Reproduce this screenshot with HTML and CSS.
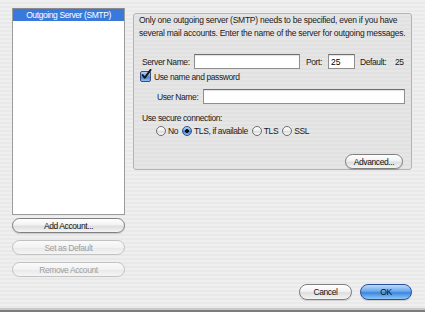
FILE: index.html
```html
<!DOCTYPE html>
<html lang="en">
<head>
    <meta charset="UTF-8">
    <title>Accounts - Outgoing Server</title>
    <link rel="stylesheet" href="styles.css">
</head>
<body>
    <div class="window">
        <div class="main">
            <!-- Account list on the left -->
            <div class="sidebar">
                <div class="account-list">
                    <div class="account-item selected">Outgoing Server (SMTP)</div>
                </div>
                <div class="side-buttons">
                    <button type="button" class="aqua-btn">Add Account...</button>
                    <button type="button" class="aqua-btn" disabled>Set as Default</button>
                    <button type="button" class="aqua-btn" disabled>Remove Account</button>
                </div>
            </div>

            <!-- SMTP settings group box -->
            <div class="group">
                <p class="intro">Only one outgoing server (SMTP) needs to be specified, even if you have<br>several mail accounts. Enter the name of the server for outgoing messages.</p>

                <div class="row server-row">
                    <label class="server-label">Server Name:</label>
                    <input type="text" class="field server-field">
                    <label class="port-label">Port:</label>
                    <input type="text" class="field port-field" value="25">
                    <span class="default-label">Default:</span>
                    <span class="default-value">25</span>
                </div>

                <label class="row check-row">
                    <span class="checkbox checked">
                        <svg width="12" height="12" viewBox="0 0 12 12"><path d="M2.6 6 L4.8 8.8 L10.6 0.9" fill="none" stroke="#151515" stroke-width="1.9" stroke-linecap="round" stroke-linejoin="round"/></svg>
                    </span>
                    Use name and password
                </label>

                <div class="row user-row">
                    <label class="user-label">User Name:</label>
                    <input type="text" class="field user-field">
                </div>

                <div class="row secure-label">Use secure connection:</div>

                <div class="row radio-row">
                    <span class="radio"></span><span class="radio-text">No</span>
                    <span class="radio selected"></span><span class="radio-text">TLS, if available</span>
                    <span class="radio"></span><span class="radio-text">TLS</span>
                    <span class="radio"></span><span class="radio-text">SSL</span>
                </div>

                <div class="row advanced-row">
                    <button type="button" class="aqua-btn advanced-btn">Advanced...</button>
                </div>
            </div>
        </div>

        <div class="footer">
            <button type="button" class="aqua-btn cancel-btn">Cancel</button>
            <button type="button" class="aqua-btn default-btn">OK</button>
        </div>
    </div>
</body>
</html>
```

FILE: styles.css
```css
/* Aqua pinstripe window */
body {
    margin: 0;
    font-family: 'Liberation Sans', Arial, sans-serif;
    font-size: 8.5px;
    letter-spacing: -0.4px;
    color: #1a1a1a;
}

.window {
    width: 425px;
    height: 312px;
    box-sizing: border-box;
    padding: 8px 13px 0 12px;
    background: repeating-linear-gradient(to bottom, #efefef 0, #efefef 2px, #e9e9e9 2px, #e9e9e9 4px);
    border-bottom: 2px solid #7c7c7c;
    box-shadow: inset 0 -2px 0 #c9c9c9;
}

.main {
    display: flex;
    align-items: flex-start;
}

/* Left column */
.sidebar {
    width: 113px;
    flex-shrink: 0;
}

.account-list {
    height: 207px;
    box-sizing: border-box;
    background: #fff;
    border: 1px solid #9c9c9c;
    border-top-color: #8a8a8a;
}

.account-item {
    height: 12px;
    line-height: 12px;
    text-align: center;
    white-space: nowrap;
}

.account-item.selected {
    background: #3a79dc;
    color: #fff;
}

.side-buttons {
    display: flex;
    flex-direction: column;
    gap: 7px;
    margin-top: 3px;
}

/* Aqua pill buttons */
.aqua-btn {
    height: 15px;
    padding: 0;
    font-family: inherit;
    font-size: 8.5px;
    letter-spacing: -0.4px;
    color: #111;
    border: 1px solid #7f7f7f;
    border-radius: 8px;
    background: linear-gradient(to bottom, #ffffff 0%, #f2f2f2 45%, #dedede 55%, #f4f4f4 100%);
    box-shadow: 0 1px 1px rgba(0, 0, 0, 0.15);
}

.aqua-btn:disabled {
    color: #a0a0a0;
    border-color: #c2c2c2;
    background: linear-gradient(to bottom, #fafafa 0%, #f2f2f2 50%, #e9e9e9 55%, #f5f5f5 100%);
    box-shadow: none;
}

/* Settings group box */
.group {
    width: 279px;
    height: 157px;
    flex-shrink: 0;
    box-sizing: border-box;
    margin: 5px 0 0 8px;
    padding: 0 5px;
    border: 1px solid #b4b4b4;
    border-radius: 3px;
    background: repeating-linear-gradient(to bottom, #e6e6e6 0, #e6e6e6 2px, #e1e1e1 2px, #e1e1e1 4px);
}

.intro {
    margin: 0;
    line-height: 13px;
    letter-spacing: -0.25px;
    white-space: nowrap;
}

.row {
    display: flex;
    align-items: center;
    white-space: nowrap;
}

.row > * {
    flex-shrink: 0;
}

.field {
    box-sizing: border-box;
    height: 15px;
    padding: 1px 2px;
    font-family: inherit;
    font-size: 8.5px;
    border: 1px solid #8f8f8f;
    border-top-color: #6f6f6f;
    background: #fff;
    box-shadow: inset 0 1px 1px rgba(0, 0, 0, 0.12);
    outline: none;
}

.server-row {
    margin-top: 14px;
    height: 15px;
    padding-left: 3px;
}

.server-label {
    width: 52px;
}

.server-field {
    width: 106px;
}

.port-label {
    margin-left: 6px;
    width: 22px;
}

.port-field {
    width: 27px;
}

.default-label {
    margin-left: 5px;
    width: 35px;
}

.check-row {
    margin-top: 2px;
    height: 11px;
    padding-left: 1px;
}

.checkbox {
    width: 11px;
    height: 11px;
    box-sizing: border-box;
    margin-right: 3px;
    border: 1px solid #3b4f7a;
    border-radius: 2px;
    background: linear-gradient(to bottom, #b9d6f6 0%, #5c9ae6 50%, #3c80dd 55%, #8fc1f4 100%);
}

.checkbox svg {
    display: block;
    margin: -3px 0 0 -1px;
}

.user-row {
    margin-top: 7px;
    height: 15px;
    padding-left: 18px;
}

.user-label {
    width: 46px;
}

.user-field {
    width: 202px;
}

.secure-label {
    margin-top: 8px;
    height: 11px;
    padding-left: 3px;
}

.radio-row {
    margin-top: 2px;
    height: 11px;
    padding-left: 17px;
}

.radio {
    width: 10px;
    height: 10px;
    box-sizing: border-box;
    border: 1px solid #6e6e6e;
    border-radius: 50%;
    background: linear-gradient(to bottom, #ffffff 0%, #ececec 50%, #dcdcdc 55%, #fafafa 100%);
}

.radio.selected {
    border-color: #2f4f8a;
    background: radial-gradient(circle, #111 0, #111 1.6px, transparent 2.2px),
        linear-gradient(to bottom, #b9d6f6 0%, #5c9ae6 50%, #3c80dd 55%, #8fc1f4 100%);
}

.radio-text {
    margin: 0 4px 0 2px;
}

.advanced-row {
    justify-content: flex-end;
    margin-top: 18px;
    padding-right: 3px;
}

.advanced-btn {
    width: 58px;
}

/* Dialog buttons */
.footer {
    display: flex;
    justify-content: flex-end;
    gap: 8px;
    margin-top: 7px;
}

.cancel-btn {
    width: 53px;
    height: 16px;
}

.default-btn {
    width: 52px;
    height: 16px;
    border-color: #2a4f9a;
    background: linear-gradient(to bottom, #bcdaf8 0%, #6aa7ec 45%, #3d86e0 55%, #8ec7f6 100%);
}
```
